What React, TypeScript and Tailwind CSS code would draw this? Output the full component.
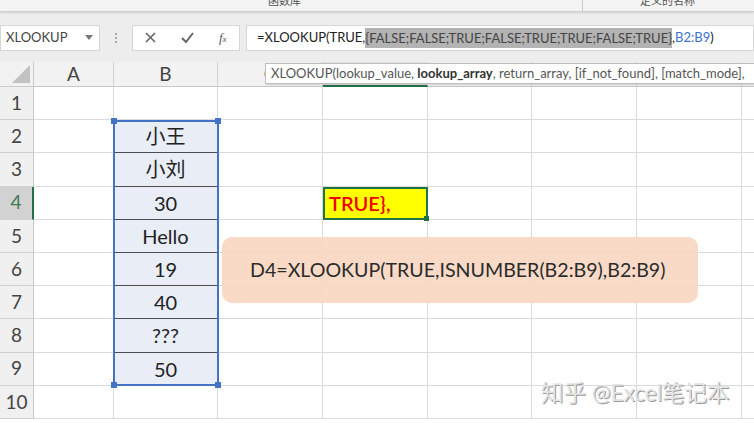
import React from "react";

const colWidths = [80, 104, 105, 105, 104, 105, 105, 60];
const colLetters = ["A", "B", "C", "D", "E", "F", "G", "H"];
const bValues = ["", "小王", "小刘", "30", "Hello", "19", "40", "???", "50", ""];

function Cell({ w, children, className = "" }: { w: number; children?: React.ReactNode; className?: string }) {
  return (
    <div className={`shrink-0 h-full border-r border-b border-[#dadada] flex items-center justify-center ${className}`} style={{ width: w }}>
      {children}
    </div>
  );
}

export default function App() {
  return (
    <div
      className="relative w-[754px] h-[423px] overflow-hidden bg-white"
      style={{ fontFamily: "Lato, 'Noto Sans CJK SC', sans-serif" }}
    >
      {/* ribbon remainder */}
      <div className="relative h-[12px] bg-[#f3f3f3] overflow-hidden text-[11px] leading-[14px] text-[#555] border-b border-[#d0d0d0] shadow-[0_1px_2px_rgba(0,0,0,0.12)]">
        <span className="absolute left-[268px] -top-[6px]">函数库</span>
        <span className="absolute left-[582px] top-0 h-full w-px bg-[#c8c8c8]" />
        <span className="absolute left-[640px] -top-[6px]">定义的名称</span>
      </div>

      {/* formula bar */}
      <div className="flex items-center h-[50px] bg-[#ededed] pt-[1px]">
        <div className="w-[100px] h-[26px] bg-white border border-[#d6d6d6] flex items-center pl-[5px] pr-[6px] text-[13px] text-[#444]">
          <span className="flex-1">XLOOKUP</span>
          <svg width="8" height="5" viewBox="0 0 8 5"><path d="M0 0h8L4 5z" fill="#777" /></svg>
        </div>
        <div className="w-[32px] flex flex-col items-center gap-[2px]">
          <span className="w-[2px] h-[2px] bg-[#aaa]" />
          <span className="w-[2px] h-[2px] bg-[#aaa]" />
          <span className="w-[2px] h-[2px] bg-[#aaa]" />
        </div>
        <div className="w-[108px] h-[26px] bg-white border border-[#d6d6d6] flex items-center justify-around text-[#666]">
          <svg width="11" height="11" viewBox="0 0 11 11"><path d="M1 1l9 9M10 1l-9 9" stroke="#666" strokeWidth="1.6" /></svg>
          <svg width="13" height="11" viewBox="0 0 13 11"><path d="M1 6l4 4L12 1" stroke="#666" strokeWidth="2" fill="none" /></svg>
          <span className="italic text-[13px] text-[#555]" style={{ fontFamily: "'Liberation Serif', serif" }}>f<span className="text-[9px]">x</span></span>
        </div>
        <div className="ml-[6px] flex-1 h-[26px] bg-white border border-[#d6d6d6] flex items-center pl-[10px] text-[13px] text-[#222] whitespace-nowrap overflow-hidden">
          <span>=XLOOKUP(TRUE,</span>
          <span className="bg-[#b3b3b3] text-[#444] leading-[20px]">{"{FALSE;FALSE;TRUE;FALSE;TRUE;TRUE;FALSE;TRUE}"}</span>
          <span>,</span>
          <span className="text-[#3b6fd1]">B2:B9</span>
          <span>)</span>
        </div>
      </div>

      {/* grid */}
      <div className="flex flex-col">
        {/* header row */}
        <div className="flex h-[25px] bg-[#f2f2f2] text-[19px] text-[#444]">
          <div className="shrink-0 w-[34px] h-full border-r border-b border-[#c9c9c9] relative">
            <svg className="absolute right-[3px] bottom-[3px]" width="18" height="18" viewBox="0 0 18 18"><path d="M18 0V18H0z" fill="#c2c2c2" /></svg>
          </div>
          {colLetters.map((c, i) => (
            <div
              key={c}
              className={`shrink-0 h-full border-r border-[#d0d0d0] flex items-center justify-center ${c === "D" ? "border-b-2 border-b-[#217346] bg-[#e2e2e2]" : "border-b border-b-[#c9c9c9]"}`}
              style={{ width: colWidths[i] }}
            >
              {c}
            </div>
          ))}
        </div>
        {/* rows */}
        {bValues.map((v, r) => {
          const row = r + 1;
          const inB = row >= 2 && row <= 9;
          return (
            <div key={row} className="flex h-[33.2px] shrink-0">
              <div
                className={`shrink-0 w-[34px] h-full border-b border-[#d0d0d0] flex items-center justify-center text-[19px] ${row === 4 ? "bg-[#d2d2d2] text-[#3d7a55] border-r-2 border-r-[#217346]" : "bg-[#f0f0f0] text-[#444] border-r border-r-[#c9c9c9]"}`}
              >
                {row}
              </div>
              <Cell w={colWidths[0]} />
              <div
                className={`shrink-0 h-full flex items-center justify-center text-[20px] text-[#222] border-r border-[#dadada] ${inB ? "bg-[#e8edf6] border-b-[1.5px] border-b-[#4d4d4d]" : "border-b border-b-[#dadada]"}`}
                style={{ width: colWidths[1] }}
              >
                {v}
              </div>
              <Cell w={colWidths[2]} />
              {row === 4 ? (
                <div
                  className="shrink-0 h-full bg-[#ffff00] border-2 border-[#217346] flex items-center pl-[4px] text-[20px] font-semibold text-[#f00000] relative"
                  style={{ width: colWidths[3] }}
                >
                  {"TRUE},"}
                  <span className="absolute -right-[3px] -bottom-[3px] w-[5px] h-[5px] bg-[#217346]" />
                </div>
              ) : (
                <Cell w={colWidths[3]} />
              )}
              <Cell w={colWidths[4]} />
              <Cell w={colWidths[5]} />
              <Cell w={colWidths[6]} />
              <Cell w={colWidths[7]} />
            </div>
          );
        })}
      </div>

      {/* selection outline B2:B9 */}
      <div className="absolute left-[113px] top-[120px] w-[106px] h-[266px] border-2 border-[#4472c4] pointer-events-none">
        <span className="absolute -left-[4px] -top-[4px] w-[6px] h-[6px] bg-[#4472c4]" />
        <span className="absolute -right-[4px] -top-[4px] w-[6px] h-[6px] bg-[#4472c4]" />
        <span className="absolute -left-[4px] -bottom-[4px] w-[6px] h-[6px] bg-[#4472c4]" />
        <span className="absolute -right-[4px] -bottom-[4px] w-[6px] h-[6px] bg-[#4472c4]" />
      </div>

      {/* tooltip */}
      <div className="absolute left-[265px] top-[63px] h-[21px] w-[520px] bg-white border border-[#bdbdbd] flex items-center pl-[5px] text-[13px] text-[#555] whitespace-nowrap shadow-[1px_1px_2px_rgba(0,0,0,0.15)]">
        XLOOKUP(lookup_value,&nbsp;<b className="text-[#333]">lookup_array</b>, return_array, [if_not_found], [match_mode],
      </div>

      {/* callout */}
      <div className="absolute left-[222px] top-[237px] w-[476px] h-[66px] rounded-[10px] bg-[#f8d8c4]/95 flex items-center pl-[28px] text-[19.6px] text-[#2b2b2b]">
        D4=XLOOKUP(TRUE,ISNUMBER(B2:B9),B2:B9)
      </div>

      {/* watermark */}
      <div className="absolute left-[541px] top-[376px] text-[22.5px] text-[#e4e4e4] [text-shadow:1px_1px_0_#9a9a9a] whitespace-nowrap">
        知乎 @Excel笔记本
      </div>
    </div>
  );
}
